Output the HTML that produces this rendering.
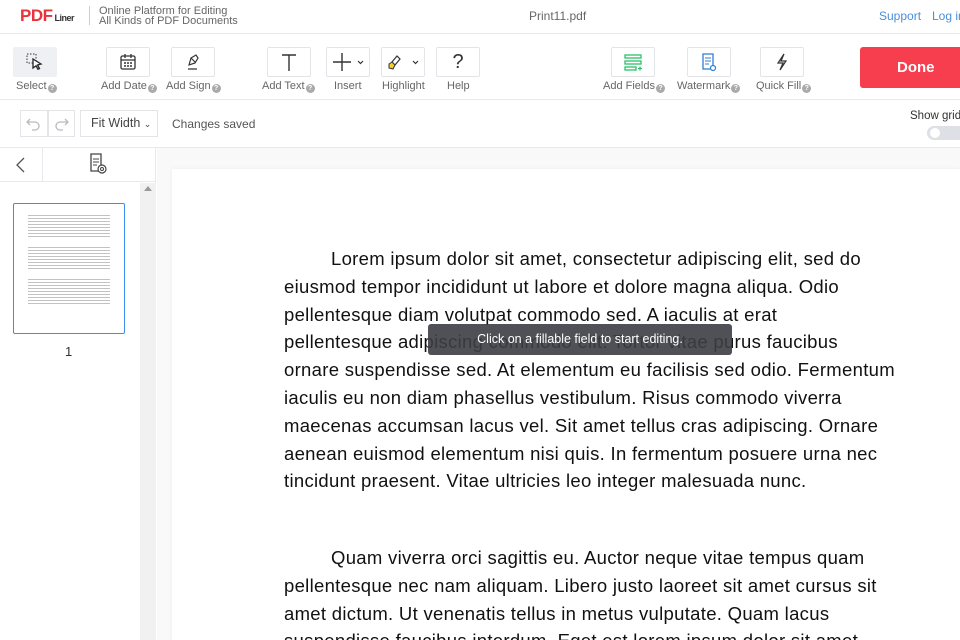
<!DOCTYPE html>
<html><head><meta charset="utf-8"><style>
*{margin:0;padding:0;box-sizing:border-box}
html,body{width:960px;height:640px;overflow:hidden}
body{background:#fff;font-family:"Liberation Sans",sans-serif;position:relative;color:#555}
.abs{position:absolute}
.hdr{left:0;top:0;width:960px;height:34px;border-bottom:1px solid #e8e9ee}
.tb{left:0;top:34px;width:960px;height:66px;border-bottom:1px solid #e8e9ee}
.btn{position:absolute;top:13px;height:30px;border:1px solid #e3e4e8;border-radius:2px;background:#fff;display:flex;align-items:center;justify-content:center}
.lbl{position:absolute;top:46px;font-size:11px;color:#666;white-space:nowrap}
.q{display:inline-block;width:9px;height:9px;border-radius:50%;background:#aaa;color:#fff;font-size:7px;line-height:9px;text-align:center;vertical-align:-1px;margin-left:1px;font-weight:bold}
.doc{left:284px;font-size:18.5px;letter-spacing:0.3px;color:#111;line-height:27.8px;white-space:nowrap}
</style></head><body>
<div class="abs hdr">
 <div class="abs" style="left:20px;top:6px;font-weight:bold;font-size:17px;color:#e8323c;letter-spacing:-0.5px">PDF<span style="font-size:9px;color:#333;margin-left:2px">Liner</span></div>
 <div class="abs" style="left:89px;top:6px;width:1px;height:19px;background:#ccc"></div>
 <div class="abs" style="left:99px;top:6px;font-size:11px;line-height:10px;color:#666;white-space:nowrap">Online Platform for Editing<br>All Kinds of PDF Documents</div>
 <div class="abs" style="left:529px;top:9px;font-size:12px;color:#666">Print11.pdf</div>
 <div class="abs" style="left:879px;top:9px;font-size:12px;color:#4a8fd8;white-space:nowrap">Support</div>
 <div class="abs" style="left:932px;top:9px;font-size:12px;color:#4a8fd8;white-space:nowrap">Log in</div>
</div>
<div class="abs tb">
 <div class="btn" style="left:13px;width:44px;background:#eef0f3;border-color:#eef0f3"><svg width="20" height="20" viewBox="0 0 20 20"><rect x="2" y="2" width="9" height="9" fill="none" stroke="#333" stroke-dasharray="1.5 1.5"/><path d="M8 7l8 5-3.5 1 2 3.5-1.5.8-2-3.5L8 16z" fill="#fff" stroke="#222" stroke-width="1.3"/></svg></div>
 <div class="lbl" style="left:16px">Select<span class="q">?</span></div>
 <div class="btn" style="left:106px;width:44px"><svg width="18" height="18" viewBox="0 0 18 18"><rect x="2" y="3" width="14" height="13" rx="1.5" fill="none" stroke="#333" stroke-width="1.3"/><path d="M2 7h14M6 1v4M12 1v4" stroke="#333" stroke-width="1.3"/><path d="M5 10h2M8 10h2M11 10h2M5 13h2M8 13h2M11 13h2" stroke="#333" stroke-width="1.4"/></svg></div>
 <div class="lbl" style="left:101px">Add Date<span class="q">?</span></div>
 <div class="btn" style="left:171px;width:44px"><svg width="18" height="18" viewBox="0 0 18 18"><path d="M5 12l2-7 5-3 2 3-3 5-6 2zM7 5l4 4M4 16h9" fill="none" stroke="#333" stroke-width="1.2"/></svg></div>
 <div class="lbl" style="left:166px">Add Sign<span class="q">?</span></div>
 <div class="btn" style="left:267px;width:44px"><svg width="18" height="20" viewBox="0 0 18 20"><path d="M2 3h14M9 3v16" stroke="#333" stroke-width="1.4"/></svg></div>
 <div class="lbl" style="left:262px">Add Text<span class="q">?</span></div>
 <div class="btn" style="left:326px;width:44px"><svg width="34" height="20" viewBox="0 0 34 20"><path d="M2 10h18M11 1v18" stroke="#333" stroke-width="1.4"/><path d="M27 9l2.5 2.5L32 9" fill="none" stroke="#333" stroke-width="1.2"/></svg></div>
 <div class="lbl" style="left:334px">Insert</div>
 <div class="btn" style="left:381px;width:44px"><svg width="34" height="20" viewBox="0 0 34 20"><path d="M6 10l5-6 3 3-5 6z" fill="#fff" stroke="#333" stroke-width="1.2"/><path d="M3 12l3-2 3 3-2 4-4-1z" fill="#f3cf2b" stroke="#333" stroke-width="1"/><path d="M27 9l2.5 2.5L32 9" fill="none" stroke="#333" stroke-width="1.2"/></svg></div>
 <div class="lbl" style="left:382px">Highlight</div>
 <div class="btn" style="left:436px;width:44px;font-size:20px;color:#333">?</div>
 <div class="lbl" style="left:447px">Help</div>
 <div class="btn" style="left:611px;width:44px"><svg width="20" height="18" viewBox="0 0 20 18"><rect x="2" y="2" width="16" height="3" fill="none" stroke="#2bc06a" stroke-width="1.3"/><rect x="2" y="8" width="16" height="3" fill="none" stroke="#2bc06a" stroke-width="1.3"/><rect x="2" y="14" width="11" height="3" fill="none" stroke="#2bc06a" stroke-width="1.3"/><path d="M15 15.5h4M17 13.5v4" stroke="#2bc06a" stroke-width="1.2"/></svg></div>
 <div class="lbl" style="left:603px">Add Fields<span class="q">?</span></div>
 <div class="btn" style="left:687px;width:44px"><svg width="18" height="20" viewBox="0 0 18 20"><path d="M3 2h10v15H3z" fill="none" stroke="#2f7ed8" stroke-width="1.3"/><path d="M5 6h6M5 9h6M5 12h4" stroke="#2f7ed8"/><circle cx="13" cy="16" r="2.5" fill="#fff" stroke="#2f7ed8" stroke-width="1.2"/></svg></div>
 <div class="lbl" style="left:677px">Watermark<span class="q">?</span></div>
 <div class="btn" style="left:760px;width:44px"><svg width="16" height="20" viewBox="0 0 16 20"><path d="M10 2L4 11h5l-3 7 6-9H7z" fill="none" stroke="#333" stroke-width="1.2"/></svg></div>
 <div class="lbl" style="left:756px">Quick Fill<span class="q">?</span></div>
 <div class="abs" style="left:860px;top:13px;width:110px;height:41px;background:#f63e4f;border-radius:3px;color:#fff;font-weight:bold;font-size:15px;line-height:41px;padding-left:37px">Done</div>
</div>
<div class="abs" style="left:0;top:101px;width:960px;height:47px;border-bottom:1px solid #e8e9ee">
 <div class="abs" style="left:20px;top:9px;width:28px;height:27px;border:1px solid #e3e4e8"><svg width="26" height="25" viewBox="0 0 26 25"><path d="M9 8l-3 3 3 3M6 11h8a4 4 0 010 8h-3" fill="none" stroke="#bbb" stroke-width="1.3"/></svg></div>
 <div class="abs" style="left:48px;top:9px;width:27px;height:27px;border:1px solid #e3e4e8"><svg width="25" height="25" viewBox="0 0 25 25"><path d="M16 8l3 3-3 3M19 11h-8a4 4 0 000 8h3" fill="none" stroke="#bbb" stroke-width="1.3"/></svg></div>
 <div class="abs" style="left:80px;top:9px;width:78px;height:27px;border:1px solid #e3e4e8;font-size:12.5px;color:#444;line-height:25px;padding-left:10px">Fit Width <span style="font-size:9px">&#8964;</span></div>
 <div class="abs" style="left:172px;top:16px;font-size:12px;color:#555">Changes saved</div>
 <div class="abs" style="left:910px;top:9px;font-size:11.5px;color:#333;white-space:nowrap">Show grid</div>
 <div class="abs" style="left:927px;top:25px;width:40px;height:14px;border-radius:7px;background:#dde0e5"><div class="abs" style="left:3px;top:2px;width:10px;height:10px;border-radius:50%;background:#fff"></div></div>
</div>
<div class="abs" style="left:0;top:148px;width:156px;height:492px;border-right:1px solid #e8e9ee">
 <div class="abs" style="left:0;top:0;width:156px;height:34px;border-bottom:1px solid #e8e9ee"></div>
 <div class="abs" style="left:42px;top:0;width:1px;height:34px;background:#e8e9ee"></div>
 <svg class="abs" style="left:14px;top:7px" width="14" height="20" viewBox="0 0 14 20"><path d="M10 3L3 10l7 7" fill="none" stroke="#555" stroke-width="1.3"/></svg>
 <svg class="abs" style="left:89px;top:4px" width="20" height="24" viewBox="0 0 20 24"><path d="M2 2h10v17H2z" fill="none" stroke="#444" stroke-width="1.3"/><path d="M4 7h6M4 10h6M4 13h4" stroke="#444"/><circle cx="13" cy="17" r="4" fill="#fff" stroke="#444" stroke-width="1.2"/><circle cx="13" cy="17" r="1.5" fill="none" stroke="#444"/></svg>
 <div class="abs" style="left:140px;top:35px;width:16px;height:457px;background:#f1f1f1"></div>
 <div class="abs" style="left:144px;top:38px;width:0;height:0;border-left:4px solid transparent;border-right:4px solid transparent;border-bottom:5px solid #999"></div>
 <div class="abs" style="left:13px;top:55px;width:112px;height:131px;border:1.5px solid #3b8ef0;border-radius:2px;background:#fff;padding:11px 14px">
  <div style="height:24px;background:repeating-linear-gradient(#999 0 1px,transparent 1px 3px);opacity:.6"></div>
  <div style="height:24px;margin-top:8px;background:repeating-linear-gradient(#999 0 1px,transparent 1px 3px);opacity:.6"></div>
  <div style="height:26px;margin-top:8px;background:repeating-linear-gradient(#999 0 1px,transparent 1px 3px);opacity:.6"></div>
 </div>
 <div class="abs" style="left:65px;top:196px;font-size:13px;color:#333">1</div>
</div>
<div class="abs" style="left:157px;top:148px;width:803px;height:492px;background:#f9f9fa;overflow:hidden">
 <div class="abs" style="left:15px;top:21px;width:790px;height:480px;background:#fff;box-shadow:0 0 4px #eee"></div>
</div>
<div class="abs doc" style="top:245px">
<div style="padding-left:47px">Lorem ipsum dolor sit amet, consectetur adipiscing elit, sed do</div>
<div>eiusmod tempor incididunt ut labore et dolore magna aliqua. Odio</div>
<div>pellentesque diam volutpat commodo sed. A iaculis at erat</div>
<div>pellentesque adipiscing commodo elit. Tortor vitae purus faucibus</div>
<div>ornare suspendisse sed. At elementum eu facilisis sed odio. Fermentum</div>
<div>iaculis eu non diam phasellus vestibulum. Risus commodo viverra</div>
<div>maecenas accumsan lacus vel. Sit amet tellus cras adipiscing. Ornare</div>
<div>aenean euismod elementum nisi quis. In fermentum posuere urna nec</div>
<div>tincidunt praesent. Vitae ultricies leo integer malesuada nunc.</div>
</div>
<div class="abs doc" style="top:544px;height:96px;overflow:hidden">
<div style="padding-left:47px">Quam viverra orci sagittis eu. Auctor neque vitae tempus quam</div>
<div>pellentesque nec nam aliquam. Libero justo laoreet sit amet cursus sit</div>
<div>amet dictum. Ut venenatis tellus in metus vulputate. Quam lacus</div>
<div>suspendisse faucibus interdum. Eget est lorem ipsum dolor sit amet</div>
</div>
<div class="abs" style="left:428px;top:324px;width:304px;height:31px;background:rgba(60,62,68,.9);border-radius:3px;color:#fff;font-size:12.5px;line-height:31px;text-align:center">Click on a fillable field to start editing.</div>
</body></html>
